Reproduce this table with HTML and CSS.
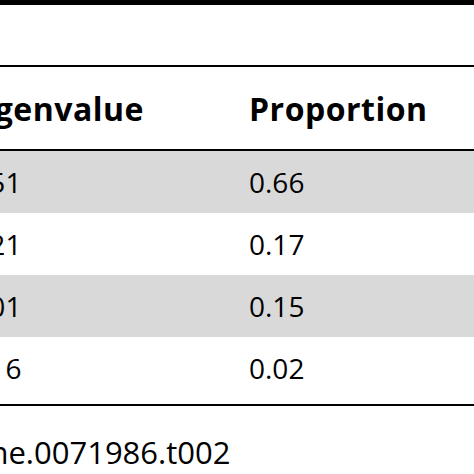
FILE: index.html
```html
<!DOCTYPE html>
<html lang="en">
<head>
    <meta charset="UTF-8">
    <title>Table 2</title>
    <link rel="stylesheet" href="styles.css">
</head>
<body>
    <div class="top-bar"></div>
    <div class="table-wrap">
        <table class="data-table">
            <thead>
                <tr>
                    <th class="col-eigen">Eigenvalue</th>
                    <th class="col-prop">Proportion</th>
                </tr>
            </thead>
            <tbody>
                <tr class="shaded">
                    <td>2.51</td>
                    <td>0.66</td>
                </tr>
                <tr>
                    <td>0.21</td>
                    <td>0.17</td>
                </tr>
                <tr class="shaded">
                    <td>0.01</td>
                    <td>0.15</td>
                </tr>
                <tr>
                    <td>0.16</td>
                    <td>0.02</td>
                </tr>
            </tbody>
        </table>
    </div>
    <p class="caption">doi:10.1371/journal.pone.0071986.t002</p>
</body>
</html>
```

FILE: styles.css
```css
html, body {
    margin: 0;
    padding: 0;
    background: #fff;
    overflow: hidden;
    width: 474px;
    height: 474px;
}

body {
    font-family: "Open Sans", "Noto Sans", sans-serif;
    color: #000;
}

.top-bar {
    height: 5px;
    background: #000;
    margin-bottom: 60px;
}

.table-wrap {
    width: 474px;
    overflow: hidden;
}

.data-table {
    border-collapse: collapse;
    margin-left: -34px;
    width: 508px;
    border-top: 2px solid #000;
    border-bottom: 2px solid #000;
}

.data-table th,
.data-table td {
    text-align: left;
    padding: 0;
    vertical-align: middle;
}

.data-table th {
    font-size: 32px;
    letter-spacing: 0.5px;
    font-weight: 700;
    height: 82px;
    border-bottom: 2px solid #000;
}

.data-table td {
    font-size: 28px;
    height: 62px;
    font-weight: 400;
}

.data-table tbody tr:last-child td {
    height: 62px;
    padding-bottom: 5px;
}

.col-eigen {
    width: 283px;
}

.shaded td {
    background: #d9d9d9;
}

.caption {
    margin: 28px 0 0 -338px;
    font-size: 31px;
    white-space: nowrap;
    line-height: 36px;
}
```
